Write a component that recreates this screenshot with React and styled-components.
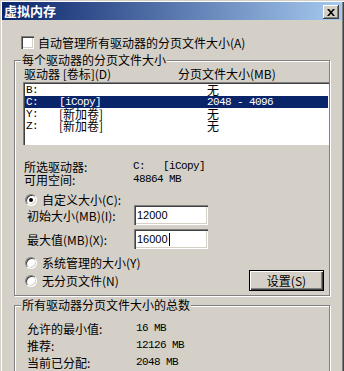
import React from "react";
import styled, { createGlobalStyle } from "styled-components";

const GlobalStyle = createGlobalStyle`
  html, body {
    margin: 0;
    padding: 0;
    background: #d4d0c8;
  }
  body {
    font-family: "Noto Sans CJK SC", "Liberation Sans", sans-serif;
    font-size: 12px;
    color: #000;
  }
`;

const Window = styled.div`
  width: 344px;
  height: 371px;
  box-sizing: border-box;
  overflow: hidden;
  background: #d4d0c8;
  padding: 2px 2px 0 2px;
  box-shadow: inset 1px 1px 0 #d4d0c8, inset 2px 2px 0 #fff,
    inset -1px 0 0 #404040, inset -2px 0 0 #808080;
`;

const TitleBar = styled.div`
  height: 18px;
  display: flex;
  align-items: center;
  justify-content: space-between;
  padding: 0 3px 0 2px;
  background: linear-gradient(to right, #0a246a, #a6caf0);
`;

const Title = styled.span`
  color: #fff;
  font-weight: bold;
  font-size: 13px;
  line-height: 18px;
`;

const CloseButton = styled.div`
  width: 16px;
  height: 14px;
  margin-top: 2px;
  box-sizing: border-box;
  background: #d4d0c8;
  display: flex;
  align-items: center;
  justify-content: center;
  box-shadow: inset -1px -1px 0 #404040, inset 1px 1px 0 #fff,
    inset -2px -2px 0 #808080;
`;

const Body = styled.div`
  padding: 0 12px;
`;

const CheckRow = styled.div`
  display: flex;
  align-items: center;
  gap: 4px;
  height: 13px;
  margin: 16px 0 0 7px;
  line-height: 13px;
`;

const CheckBox = styled.span`
  width: 13px;
  height: 13px;
  box-sizing: border-box;
  background: #fff;
  box-shadow: inset 1px 1px 0 #808080, inset 2px 2px 0 #404040,
    inset -1px -1px 0 #fff, inset -2px -2px 0 #d4d0c8;
`;

const GroupBox = styled.div`
  position: relative;
  margin-top: ${(p) => p.$gap}px;
  border: 1px solid #808080;
  box-shadow: inset 1px 1px 0 #fff, 1px 1px 0 #fff;
  padding: ${(p) => p.$pad};
`;

const GroupTitle = styled.span`
  position: absolute;
  top: -8px;
  left: 6px;
  padding: 0 1px;
  background: #d4d0c8;
  line-height: 14px;
`;

const HeaderRow = styled.div`
  display: grid;
  grid-template-columns: 154px 1fr;
  height: 14px;
  line-height: 14px;
  margin-left: 1px;
`;

const ListBox = styled.div`
  margin-top: 1px;
  height: 63px;
  box-sizing: border-box;
  padding: 2px 1px 2px 2px;
  background: #fff;
  box-shadow: inset 1px 1px 0 #808080, inset 2px 2px 0 #404040;
`;

const ListRow = styled.div`
  display: grid;
  grid-template-columns: 33px 148px 1fr;
  height: 12px;
  line-height: 12px;
  padding-left: 1px;
  background: ${(p) => (p.$selected ? "#0a246a" : "transparent")};
  color: ${(p) => (p.$selected ? "#fff" : "#000")};
`;

const Mono = styled.span`
  font-family: "Liberation Mono", "Noto Sans CJK SC", monospace;
  font-size: 11px;
  letter-spacing: -0.6px;
  white-space: pre;
`;

const InfoRow = styled.div`
  display: grid;
  grid-template-columns: ${(p) => p.$col || 109}px 1fr;
  height: 13px;
  line-height: 13px;
  margin-top: ${(p) => p.$gap || 0}px;
  margin-left: ${(p) => p.$indent || 1}px;
`;

const RadioRow = styled.div`
  display: flex;
  align-items: center;
  gap: 5px;
  height: 12px;
  line-height: 12px;
  margin-top: ${(p) => p.$gap || 0}px;
  margin-left: 2px;
`;

const Radio = styled.span`
  position: relative;
  width: 12px;
  height: 12px;
  box-sizing: border-box;
  border-radius: 50%;
  background: #fff;
  border: 1px solid;
  border-color: #808080 #fff #fff #808080;
  box-shadow: inset 1px 1px 0 #404040, inset -1px -1px 0 #d4d0c8;

  &::after {
    content: "";
    display: ${(p) => (p.$checked ? "block" : "none")};
    position: absolute;
    left: 3px;
    top: 3px;
    width: 4px;
    height: 4px;
    border-radius: 50%;
    background: #000;
  }
`;

const FieldRow = styled.div`
  display: grid;
  grid-template-columns: 111px 74px;
  align-items: center;
  height: 20px;
  margin-top: ${(p) => p.$gap || 0}px;
`;

const FieldLabel = styled.span`
  padding-left: 4px;
  line-height: 13px;
`;

const Edit = styled.div`
  height: 20px;
  box-sizing: border-box;
  padding: 0 3px;
  display: flex;
  align-items: center;
  background: #fff;
  font-family: "Liberation Sans", sans-serif;
  font-size: 11px;
  box-shadow: inset 1px 1px 0 #808080, inset 2px 2px 0 #404040,
    inset -1px -1px 0 #fff, inset -2px -2px 0 #d4d0c8;
`;

const Caret = styled.span`
  width: 1px;
  height: 13px;
  margin-left: 1px;
  background: #000;
`;

const BottomRow = styled.div`
  display: flex;
  align-items: center;
  justify-content: space-between;
  height: 21px;
  margin-top: 1px;
  padding-right: 5px;
`;

const Button = styled.div`
  width: 75px;
  height: 21px;
  box-sizing: border-box;
  border: 1px solid #000;
  display: flex;
  align-items: center;
  justify-content: center;
  line-height: 13px;
  box-shadow: inset 1px 1px 0 #fff, inset -1px -1px 0 #404040,
    inset -2px -2px 0 #808080;
`;

const drives = [
  { letter: "B:", label: "", size: "无" },
  { letter: "C:", label: "[iCopy]", size: "2048 - 4096", selected: true, mono: true },
  { letter: "Y:", label: "[新加卷]", size: "无" },
  { letter: "Z:", label: "[新加卷]", size: "无" },
];

const totals = [
  ["允许的最小值:", "16 MB"],
  ["推荐:", "12126 MB"],
  ["当前已分配:", "2048 MB"],
];

export default function App() {
  return (
    <Window>
      <GlobalStyle />
      <TitleBar>
        <Title>虚拟内存</Title>
        <CloseButton>
          <svg width="8" height="7" viewBox="0 0 8 7">
            <path
              d="M0 0h2l2 2.2L6 0h2L5 3.5 8 7H6L4 4.8 2 7H0l3-3.5z"
              fill="#000"
            />
          </svg>
        </CloseButton>
      </TitleBar>
      <Body>
        <CheckRow>
          <CheckBox />
          <span>自动管理所有驱动器的分页文件大小(A)</span>
        </CheckRow>

        <GroupBox $gap={11} $pad="6px 0 4px 8px">
          <GroupTitle>每个驱动器的分页文件大小</GroupTitle>
          <HeaderRow>
            <span>驱动器 [卷标](D)</span>
            <span>分页文件大小(MB)</span>
          </HeaderRow>
          <ListBox>
            {drives.map((d) => (
              <ListRow key={d.letter} $selected={d.selected}>
                <Mono>{d.letter}</Mono>
                {d.mono ? <Mono>{d.label}</Mono> : <span>{d.label}</span>}
                {d.mono ? <Mono>{d.size}</Mono> : <span>{d.size}</span>}
              </ListRow>
            ))}
          </ListBox>

          <InfoRow $gap={15}>
            <span>所选驱动器:</span>
            <Mono>C:   [iCopy]</Mono>
          </InfoRow>
          <InfoRow>
            <span>可用空间:</span>
            <Mono>48864 MB</Mono>
          </InfoRow>

          <RadioRow $gap={8}>
            <Radio $checked />
            <span>自定义大小(C):</span>
          </RadioRow>
          <FieldRow $gap={-1}>
            <FieldLabel>初始大小(MB)(I):</FieldLabel>
            <Edit>12000</Edit>
          </FieldRow>
          <FieldRow $gap={4}>
            <FieldLabel>最大值(MB)(X):</FieldLabel>
            <Edit>
              16000
              <Caret />
            </Edit>
          </FieldRow>

          <RadioRow $gap={8}>
            <Radio />
            <span>系统管理的大小(Y)</span>
          </RadioRow>
          <BottomRow>
            <RadioRow>
              <Radio />
              <span>无分页文件(N)</span>
            </RadioRow>
            <Button>设置(S)</Button>
          </BottomRow>
        </GroupBox>

        <GroupBox $gap={9} $pad="16px 0 20px 11px">
          <GroupTitle>所有驱动器分页文件大小的总数</GroupTitle>
          {totals.map(([label, value], i) => (
            <InfoRow key={label} $gap={i ? 4 : 0} $indent={0}>
              <span>{label}</span>
              <Mono>{value}</Mono>
            </InfoRow>
          ))}
        </GroupBox>
      </Body>
    </Window>
  );
}
